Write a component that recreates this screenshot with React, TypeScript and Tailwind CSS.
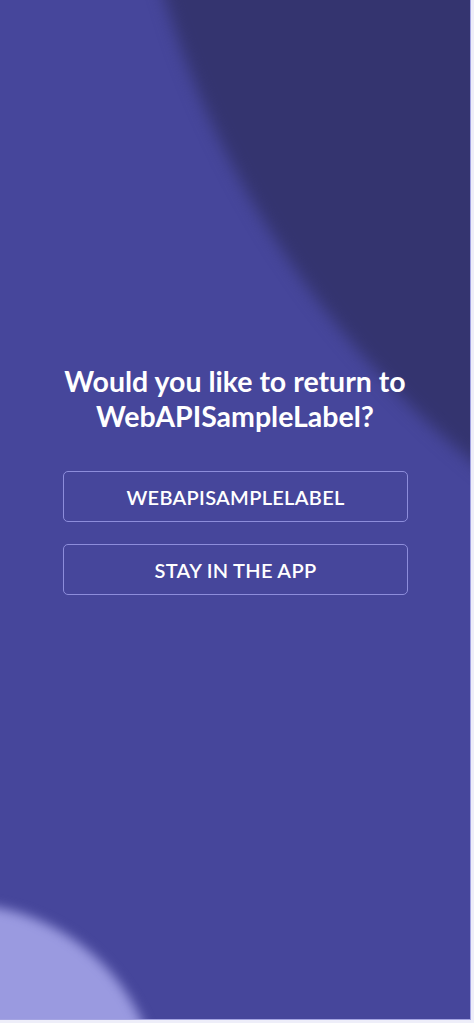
import React from "react";

export default function App() {
  return (
    <div className="w-[474px] h-[1023px] bg-[#eeeef9] overflow-hidden">
      <div className="relative w-[471px] h-[1020px] overflow-hidden bg-[#46469b] border-r border-b border-[#a4a4e2]">
        <div className="absolute left-[125px] top-[-1226px] w-[1904px] h-[1904px] rounded-full bg-[#34346f] blur-[8px]" />
        <div className="absolute left-[-240px] top-[904px] w-[400px] h-[400px] rounded-full bg-[#9a9ae0] blur-[6px]" />
        <div className="relative flex flex-col items-center pt-[364px]">
          <h1
            className="text-white text-center font-bold text-[28.5px] leading-[35px]"
            style={{ fontFamily: "Lato, 'Open Sans', sans-serif" }}
          >
            Would you like to return to
            <br />
            WebAPISampleLabel?
          </h1>
          <div className="mt-[37px] flex flex-col gap-[22px] w-[345px] ml-[1px]">
            <button
              className="h-[51px] w-full rounded-[5px] border border-[#8d8ddb] text-white text-[20px] font-semibold tracking-[0.3px]"
              style={{ fontFamily: "Lato, 'Open Sans', sans-serif" }}
            >
              WEBAPISAMPLELABEL
            </button>
            <button
              className="h-[51px] w-full rounded-[5px] border border-[#8d8ddb] text-white text-[20px] font-semibold tracking-[0.3px]"
              style={{ fontFamily: "Lato, 'Open Sans', sans-serif" }}
            >
              STAY IN THE APP
            </button>
          </div>
        </div>
      </div>
    </div>
  );
}
